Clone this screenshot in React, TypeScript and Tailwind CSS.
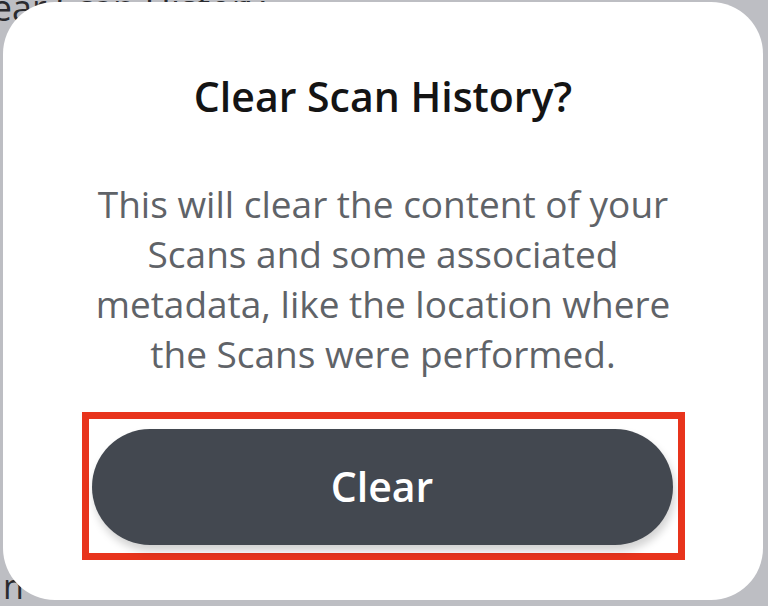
import React from "react";

export default function App() {
  return (
    <div
      className="relative w-[768px] h-[606px] overflow-hidden bg-[#bdbec3]"
      style={{ fontFamily: "'Open Sans', 'Noto Sans', sans-serif" }}
    >
      <div className="absolute left-[-40px] top-[-19px] whitespace-nowrap text-[36px] text-[#2a2b2f]">
        Clear Scan History
      </div>
      <div className="absolute left-[3px] top-[561px] text-[34px] text-[#2a2b2f]">
        n
      </div>
      <div className="relative flex h-full pl-[3px] pr-[5px] pt-[2px] pb-[6px]">
        <div className="flex flex-1 flex-col items-center rounded-[52px] bg-white">
          <h1 className="mt-[66px] text-[41px] font-semibold leading-[56px] text-[#141414]">
            Clear Scan History?
          </h1>
          <p className="mt-[55px] text-center text-[37px] leading-[50px] text-[#5f6368]">
            This will clear the content of your
            <br />
            Scans and some associated
            <br />
            metadata, like the location where
            <br />
            the Scans were performed.
          </p>
          <div className="mt-[33px] w-[603px] border-[7px] border-[#e8341c] pl-[3px] pr-[5px] pt-[10px] pb-[8px]">
            <button className="flex h-[116px] w-full items-center justify-center rounded-full bg-[#434850] text-[41px] font-semibold text-white shadow-[2px_6px_8px_rgba(0,0,0,0.18)]">
              Clear
            </button>
          </div>
        </div>
      </div>
    </div>
  );
}
